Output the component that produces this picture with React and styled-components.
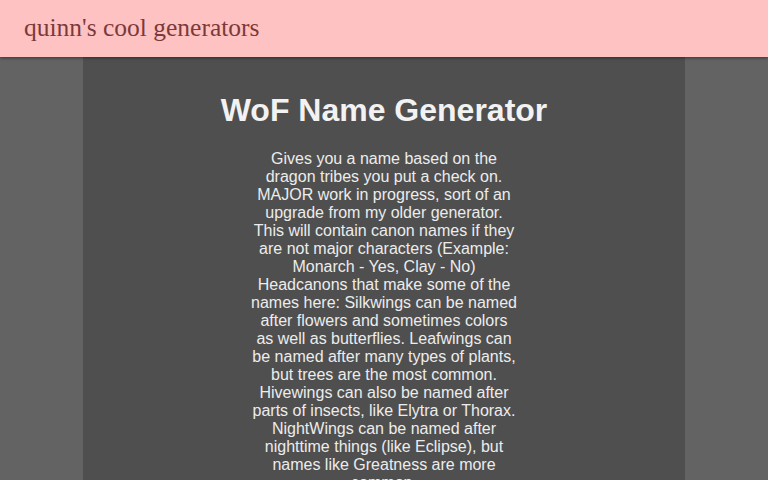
import styled, { createGlobalStyle } from "styled-components";

const GlobalStyle = createGlobalStyle`
  html, body {
    margin: 0;
    padding: 0;
    background-color: #636363;
  }
  body {
    font-family: "Liberation Sans", Arial, sans-serif;
  }
`;

const Page = styled.div`
  min-height: 100vh;
  display: flex;
  flex-direction: column;
`;

const TopBar = styled.header`
  height: 57px;
  background-color: #ffc2c2;
  display: flex;
  align-items: center;
  padding: 0 24px;
  box-shadow: 0 1px 3px rgba(0, 0, 0, 0.45);
  position: relative;
  z-index: 2;
`;

const SiteName = styled.div`
  font-family: "Liberation Serif", "Times New Roman", serif;
  font-size: 25.5px;
  color: #7b3a3a;
  margin-top: -1px;
`;

const Column = styled.main`
  flex: 1;
  width: 602px;
  margin: 0 auto;
  background-color: #4f4f4f;
  padding-top: 14px;
  display: flex;
  flex-direction: column;
  align-items: center;
`;

const Title = styled.h1`
  margin: 21px 0 21px;
  font-size: 32px;
  font-weight: bold;
  color: #f2f2f2;
  text-align: center;
`;

const Blurb = styled.p`
  margin: 0;
  width: 267px;
  font-size: 16px;
  line-height: 18px;
  color: #ececec;
  text-align: center;
`;

function App() {
  return (
    <Page>
      <GlobalStyle />
      <TopBar>
        <SiteName>quinn's cool generators</SiteName>
      </TopBar>
      <Column>
        <Title>WoF Name Generator</Title>
        <Blurb>
          Gives you a name based on the dragon tribes you put a check on.
          MAJOR work in progress, sort of an upgrade from my older generator.
          This will contain canon names if they are not major characters
          (Example: Monarch - Yes, Clay - No)
          <br />
          Headcanons that make some of the names here: Silkwings can be named
          after flowers and sometimes colors as well as butterflies. Leafwings
          can be named after many types of plants, but trees are the most
          common. Hivewings can also be named after parts of insects, like
          Elytra or Thorax. NightWings can be named after nighttime things
          (like Eclipse), but names like Greatness are more common.
        </Blurb>
      </Column>
    </Page>
  );
}

export default App;
